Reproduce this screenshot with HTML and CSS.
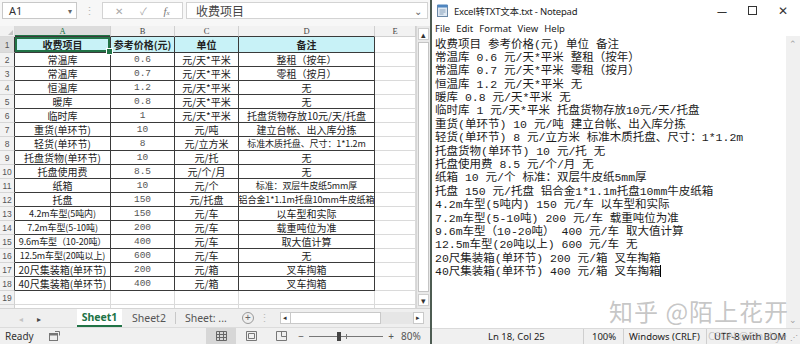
FILE: index.html
```html
<!DOCTYPE html>
<html lang="zh">
<head>
<meta charset="utf-8">
<title>Excel转TXT文本</title>
<link rel="stylesheet" href="styles.css">
</head>
<body>
<div class="app">
  <div class="excel">
    <div class="fbar">
      <div class="namebox"><span>A1</span><span class="dd">▾</span></div>
      <div class="vdots">⋮</div>
      <div class="fbtns"><span class="fx-x">✕</span><span class="fx-ok">✓</span><span class="fx-f">f<small>x</small></span></div>
      <div class="ftext"><span>收费项目</span><span class="dd2">⌄</span></div>
    </div>
    <div class="sheetwrap">
      <div class="grid">
        <div class="corner"></div><div class="colh sel tb">A</div><div class="colh tb">B</div><div class="colh tb">C</div><div class="colh tb">D</div><div class="colh">E</div>

        <div class="rn rsel">1</div><div class="c hd a1">收费项目</div><div class="c hd">参考价格(元)</div><div class="c hd">单位</div><div class="c hd">备注</div><div class="e"></div>
        <div class="rn">2</div><div class="c">常温库</div><div class="c num">0.6</div><div class="c">元/天*平米</div><div class="c">整租（按年）</div><div class="e"></div>
        <div class="rn">3</div><div class="c">常温库</div><div class="c num">0.7</div><div class="c">元/天*平米</div><div class="c">零租（按月）</div><div class="e"></div>
        <div class="rn">4</div><div class="c">恒温库</div><div class="c num">1.2</div><div class="c">元/天*平米</div><div class="c">无</div><div class="e"></div>
        <div class="rn">5</div><div class="c">暖库</div><div class="c num">0.8</div><div class="c">元/天*平米</div><div class="c">无</div><div class="e"></div>
        <div class="rn">6</div><div class="c">临时库</div><div class="c num">1</div><div class="c">元/天*平米</div><div class="c">托盘货物存放10元/天/托盘</div><div class="e"></div>
        <div class="rn">7</div><div class="c">重货(单环节)</div><div class="c num">10</div><div class="c">元/吨</div><div class="c">建立台帐、出入库分拣</div><div class="e"></div>
        <div class="rn">8</div><div class="c">轻货(单环节)</div><div class="c num">8</div><div class="c">元/立方米</div><div class="c sm">标准木质托盘、尺寸：1*1.2m</div><div class="e"></div>
        <div class="rn">9</div><div class="c">托盘货物(单环节)</div><div class="c num">10</div><div class="c">元/托</div><div class="c">无</div><div class="e"></div>
        <div class="rn">10</div><div class="c">托盘使用费</div><div class="c num">8.5</div><div class="c">元/个/月</div><div class="c">无</div><div class="e"></div>
        <div class="rn">11</div><div class="c">纸箱</div><div class="c num">10</div><div class="c">元/个</div><div class="c sm">标准：双层牛皮纸5mm厚</div><div class="e"></div>
        <div class="rn">12</div><div class="c">托盘</div><div class="c num">150</div><div class="c">元/托盘</div><div class="c sm">铝合金1*1.1m托盘10mm牛皮纸箱</div><div class="e"></div>
        <div class="rn">13</div><div class="c sm">4.2m车型(5吨内)</div><div class="c num">150</div><div class="c">元/车</div><div class="c">以车型和实际</div><div class="e"></div>
        <div class="rn">14</div><div class="c sm">7.2m车型(5-10吨)</div><div class="c num">200</div><div class="c">元/车</div><div class="c">载重吨位为准</div><div class="e"></div>
        <div class="rn">15</div><div class="c sm">9.6m车型（10-20吨）</div><div class="c num">400</div><div class="c">元/车</div><div class="c">取大值计算</div><div class="e"></div>
        <div class="rn">16</div><div class="c sm">12.5m车型(20吨以上)</div><div class="c num">600</div><div class="c">元/车</div><div class="c">无</div><div class="e"></div>
        <div class="rn">17</div><div class="c">20尺集装箱(单环节)</div><div class="c num">200</div><div class="c">元/箱</div><div class="c">叉车掏箱</div><div class="e"></div>
        <div class="rn">18</div><div class="c">40尺集装箱(单环节)</div><div class="c num">400</div><div class="c">元/箱</div><div class="c">叉车掏箱</div><div class="e"></div>
        <div class="rn rl">19</div><div class="e"></div><div class="e"></div><div class="e"></div><div class="e"></div><div class="e"></div>
        <div class="rn rl">20</div><div class="e"></div><div class="e"></div><div class="e"></div><div class="e"></div><div class="e"></div>
      </div>
      <div class="vscroll">
        <div class="sarr">▴</div>
        <div class="sthumb"></div>
        <div class="sarr">▾</div>
      </div>
    </div>
    <div class="tabs">
      <div class="tnav"><span class="tprev">◂</span><span class="tnext">▸</span></div>
      <div class="tab active">Sheet1</div>
      <div class="tab">Sheet2</div>
      <div class="tsep"></div>
      <div class="tab">Sheet: ...</div>
      <div class="tadd">+</div>
      <div class="tdots">⋮</div>
      <div class="hscroll">
        <div class="harr">◂</div>
        <div class="hthumb"></div>
        <div class="htrack"></div>
        <div class="harr">▸</div>
      </div>
    </div>
    <div class="status">
      <span class="ready">Ready</span>
      <span class="macro">
        <svg width="11" height="10" viewBox="0 0 11 10"><rect x="0.5" y="2.5" width="8" height="7" fill="none" stroke="#777"/><rect x="0.5" y="2.5" width="8" height="2" fill="#777"/><path d="M6 0.5h4.5v4" fill="none" stroke="#777"/></svg>
      </span>
      <span class="views">
        <span class="vbtn on"><svg width="11" height="10" viewBox="0 0 11 10"><path d="M0.5 0.5h10v9h-10z M0.5 3.5h10 M0.5 6.5h10 M3.5 0.5v9 M7.5 0.5v9" fill="none" stroke="#666"/></svg></span>
        <span class="vbtn"><svg width="11" height="10" viewBox="0 0 11 10"><path d="M0.5 0.5h10v9h-10z M2.5 2.5h6v5h-6z" fill="none" stroke="#777"/></svg></span>
        <span class="vbtn"><svg width="11" height="10" viewBox="0 0 11 10"><path d="M0.5 0.5h10v9h-10z M5.5 0.5v5h5" fill="none" stroke="#777"/></svg></span>
      </span>
      <span class="zoomctl">
        <span class="zm">−</span>
        <span class="slider"><span class="knob"></span><span class="tick"></span></span>
        <span class="zp">+</span>
        <span class="zpct">80%</span>
      </span>
    </div>
  </div>
  <div class="divider"></div>
  <div class="notepad">
    <div class="ntitle">
      <svg class="nicon" width="11" height="13" viewBox="0 0 11 13"><rect x="0.5" y="1.5" width="10" height="11" fill="#dfe9f3" stroke="#6b88a6"/><rect x="0.5" y="0.5" width="10" height="3" fill="#4f86c0"/><path d="M2.5 6h6M2.5 8h6M2.5 10h4" stroke="#8aa2ba"/></svg>
      <span class="ttext">Excel转TXT文本.txt - Notepad</span>
      <span class="wbtns"><span class="wmin">—</span><span class="wmax"></span><span class="wclose">✕</span></span>
    </div>
    <div class="nmenu"><span>File</span><span>Edit</span><span>Format</span><span>View</span><span>Help</span></div>
    <div class="nbody">
      <div class="ntext"><div class="ln">收费项目 参考价格(元) 单位 备注</div><div class="ln">常温库 0.6 元/天*平米 整租（按年）</div><div class="ln">常温库 0.7 元/天*平米 零租（按月）</div><div class="ln">恒温库 1.2 元/天*平米 无</div><div class="ln">暖库 0.8 元/天*平米 无</div><div class="ln">临时库 1 元/天*平米 托盘货物存放10元/天/托盘</div><div class="ln">重货(单环节) 10 元/吨 建立台帐、出入库分拣</div><div class="ln">轻货(单环节) 8 元/立方米 标准木质托盘、尺寸：1*1.2m</div><div class="ln">托盘货物(单环节) 10 元/托 无</div><div class="ln">托盘使用费 8.5 元/个/月 无</div><div class="ln">纸箱 10 元/个 标准：双层牛皮纸5mm厚</div><div class="ln">托盘 150 元/托盘 铝合金1*1.1m托盘10mm牛皮纸箱</div><div class="ln">4.2m车型(5吨内) 150 元/车 以车型和实际</div><div class="ln">7.2m车型(5-10吨) 200 元/车 载重吨位为准</div><div class="ln">9.6m车型（10-20吨） 400 元/车 取大值计算</div><div class="ln">12.5m车型(20吨以上) 600 元/车 无</div><div class="ln">20尺集装箱(单环节) 200 元/箱 叉车掏箱</div><div class="ln">40尺集装箱(单环节) 400 元/箱 叉车掏箱<span class="caret"></span></div></div>
      <div class="nscroll"><span class="nup">⌃</span><span class="ndown">⌄</span></div>
    </div>
    <div class="nstatus">
      <span class="seg s0"></span>
      <span class="seg s1">Ln 18, Col 25</span>
      <span class="seg s2">100%</span>
      <span class="seg s3">Windows (CRLF)</span>
      <span class="seg s4">UTF-8 with BOM</span>
      <span class="grip">⋰</span>
    </div>
    <div class="wm">知乎 @陌上花开</div>
    <div class="wm2">CSDN @Elnabye</div>
  </div>
</div>
</body>
</html>
```

FILE: styles.css
```css
* { box-sizing: border-box; margin: 0; padding: 0; }
html, body { width: 800px; height: 344px; overflow: hidden; background: #fff; }
body { font-family: "Noto Sans", "Noto Sans CJK SC", sans-serif; color: #222; }

.app { display: flex; width: 800px; height: 344px; }

/* ---------- Excel ---------- */
.excel { width: 430px; display: flex; flex-direction: column; background: #f3f3f3; }
.divider { width: 2px; background: #4d5c52; }

.fbar { height: 26px; display: flex; align-items: flex-start; padding: 2px 2px 0 2px; background: #f7f7f7; }
.namebox { width: 75px; height: 17px; background: #fff; border: 1px solid #c8c8c8; display: flex; align-items: center; justify-content: space-between; padding: 0 4px 0 6px; font-size: 11px; color: #333; }
.namebox .dd { font-size: 8px; color: #666; }
.vdots { width: 25px; height: 17px; text-align: center; color: #b5b5b5; font-size: 11px; line-height: 17px; }
.fbtns { width: 81px; height: 17px; background: #fff; border: 1px solid #d3d3d3; display: flex; align-items: center; justify-content: space-around; padding: 0 4px; color: #a8a8a8; font-size: 10px; }
.fx-f { font-family: "Liberation Serif", serif; font-style: italic; font-size: 11px; color: #777; }
.fx-f small { font-size: 7px; }
.ftext { flex: 1; margin-left: 3px; height: 17px; background: #fff; border: 1px solid #d3d3d3; display: flex; align-items: center; justify-content: space-between; padding: 0 5px 0 9px; font-size: 12px; color: #444; font-family: "Noto Sans CJK SC", sans-serif; }
.ftext .dd2 { font-size: 10px; color: #666; line-height: 8px; }

.sheetwrap { height: 282px; display: flex; background: #fff; }
.grid { width: 416px; height: 282px; overflow: hidden; display: grid; grid-template-columns: 15px 96px 64px 64px 136px 41px; grid-template-rows: 11px 16px repeat(19, 14px); background: #fff; }
.grid > div { border-right: 1px solid #dadada; border-bottom: 1px solid #dadada; overflow: hidden; white-space: nowrap; text-align: center; display: flex; align-items: center; justify-content: center; }

.colh { font-family: "Liberation Serif", serif; font-size: 8.5px; color: #444; background: #f2f2f2; border-color: #d0d0d0 !important; }
.grid > .tb { border-bottom-color: #3a3a3a !important; }
.colh.sel { background: #dcdcdc; color: #217346; box-shadow: inset 0 -1px 0 #217346; }
.corner { position: relative; background: #f2f2f2; }
.corner::after { content: ""; position: absolute; right: 1px; bottom: 1px; border-left: 5px solid transparent; border-bottom: 5px solid #c4c4c4; }

.grid > .rn { font-family: "Liberation Sans", sans-serif; font-size: 8.5px; color: #555; background: #f2f2f2; border-right-color: #3a3a3a; border-bottom-color: #d6d6d6; padding-top: 1px; }
.grid > .rn.rl { border-right-color: #d0d0d0; }
.grid > .rsel { background: #dcdcdc; }

.grid > .c { font-family: "Noto Sans CJK SC", sans-serif; font-size: 10px; line-height: 12px; color: #222; border-right-color: #3a3a3a; border-bottom-color: #3a3a3a; }
.grid > .sm { font-size: 9px; letter-spacing: -0.1px; }
.grid > .num { font-family: "Liberation Mono", monospace; font-size: 9.5px; color: #555; }
.grid > .hd { background: #c8f2f7; font-weight: bold; font-size: 10px; }
.grid > .a1 { position: relative; overflow: visible; box-shadow: inset 0 0 0 2px #217346; }
.grid > .a1::after { content: ""; position: absolute; right: -3px; bottom: -3px; width: 5px; height: 5px; background: #217346; border: 1px solid #fff; }

.vscroll { width: 14px; background: #e9e9e9; border-left: 1px solid #d6d6d6; display: flex; flex-direction: column; align-items: center; padding: 2px 0; }
.sarr { width: 11px; height: 12px; font-size: 9px; line-height: 12px; text-align: center; color: #333; background: #fff; border: 1px solid #cfcfcf; }
.sthumb { flex: 1; width: 11px; margin: 2px 0; background: #fff; border: 1px solid #c4c4c4; }

.tabs { height: 19px; display: flex; align-items: stretch; background: #efefef; border-top: 1px solid #d4d4d4; font-size: 10.5px; color: #444; }
.tnav { width: 77px; display: flex; align-items: center; font-size: 8px; }
.tprev { margin-left: 19px; color: #c3c3c3; }
.tnext { margin-left: 14px; color: #444; }
.tab { display: flex; align-items: center; padding: 0 7px; color: #555; }
.tab.active { width: 45px; justify-content: center; padding: 0; background: #fff; color: #217346; font-weight: bold; border-bottom: 2px solid #217346; margin-right: 3px; }
.tsep { width: 1px; background: #c8c8c8; margin: 3px 2px; }
.tadd { width: 12px; height: 12px; border: 1px solid #999; border-radius: 50%; margin: 3px 0 0 8px; font-size: 10px; line-height: 9px; text-align: center; color: #666; }
.tdots { width: 22px; text-align: center; color: #bbb; line-height: 18px; }
.hscroll { width: 144px; display: flex; align-items: center; margin-left: 4px; height: 12px; margin-top: 3px; }
.harr { width: 11px; height: 12px; background: #fff; border: 1px solid #c9c9c9; font-size: 7px; line-height: 10px; text-align: center; color: #333; }
.hthumb { width: 90px; height: 12px; background: #fff; border: 1px solid #c9c9c9; border-left: none; }
.htrack { flex: 1; height: 12px; background: #e6e6e6; }

.status { height: 17px; display: flex; align-items: center; background: #f0f0f0; border-top: 1px solid #dcdcdc; font-size: 10px; color: #333; }
.ready { margin-left: 5px; width: 40px; }
.macro { display: flex; margin-left: 4px; }
.views { display: flex; margin-left: 146px; height: 16px; }
.vbtn { width: 30px; display: flex; align-items: center; justify-content: center; }
.vbtn.on { background: #d7d7d7; }
.zoomctl { display: flex; align-items: center; margin-left: 0; color: #555; }
.zm { width: 10px; text-align: center; }
.slider { position: relative; width: 74px; height: 1px; background: #777; margin: 0 3px; }
.knob { position: absolute; left: 28px; top: -4px; width: 4px; height: 9px; background: #444; }
.tick { position: absolute; left: 37px; top: -2px; width: 1px; height: 5px; background: #777; }
.zp { width: 10px; text-align: center; }
.zpct { margin-left: 5px; }

/* ---------- Notepad ---------- */
.notepad { flex: 1; display: flex; flex-direction: column; position: relative; background: #fff; overflow: hidden; }
.ntitle { height: 21px; display: flex; align-items: center; padding-left: 5px; font-size: 9.5px; color: #222; }
.nicon { flex: none; }
.ttext { margin-left: 6px; letter-spacing: -0.2px; }
.wbtns { margin-left: auto; display: flex; align-items: center; height: 21px; }
.wmin { width: 30px; text-align: center; font-size: 10px; color: #333; }
.wmax { width: 9px; height: 9px; border: 1px solid #333; margin: 0 12px 0 11px; }
.wclose { width: 28px; text-align: center; font-size: 12px; color: #333; margin-right: 3px; }
.nmenu { height: 15px; display: flex; align-items: center; gap: 6px; padding-left: 3px; font-size: 9.5px; color: #222; }
.nbody { flex: 1; display: flex; min-height: 0; }
.ntext { flex: 1; padding: 1.5px 0 0 3px; font-family: "Liberation Mono", "Noto Sans CJK SC", monospace; font-size: 11.5px; color: #1c1c1c; }
.ln { height: 13.4px; line-height: 13.4px; white-space: pre; }
.caret { display: inline-block; width: 1px; height: 12px; background: #000; vertical-align: -2px; }
.nscroll { width: 14px; background: #f0f0f0; display: flex; flex-direction: column; justify-content: space-between; align-items: center; padding: 2px 0 4px; font-size: 9px; color: #a0a0a0; }
.nup { line-height: 12px; }
.ndown { line-height: 8px; }
.nstatus { height: 16px; display: flex; align-items: center; background: #f0f0f0; border-top: 1px solid #dadada; font-size: 9.5px; color: #222; }
.seg { height: 16px; line-height: 15px; white-space: nowrap; }
.s0 { width: 50px; }
.s1 { width: 101px; padding-left: 6px; }
.s2 { width: 40px; padding-left: 8px; border-left: 1px solid #cfcfcf; }
.s3 { width: 83px; padding-left: 5px; border-left: 1px solid #cfcfcf; }
.s4 { width: 82px; padding-left: 7px; border-left: 1px solid #cfcfcf; }
.grip { font-size: 8px; color: #999; margin-left: 2px; }
.wm { position: absolute; left: 177px; top: 293px; font-family: "Noto Sans CJK SC", sans-serif; font-size: 24px; color: rgba(150,150,150,0.55); letter-spacing: 1px; white-space: nowrap; text-shadow: 0 0 1px rgba(255,255,255,0.8); }
.wm2 { position: absolute; left: 276px; top: 329px; font-size: 10.5px; color: rgba(160,160,160,0.55); white-space: nowrap; }
```
